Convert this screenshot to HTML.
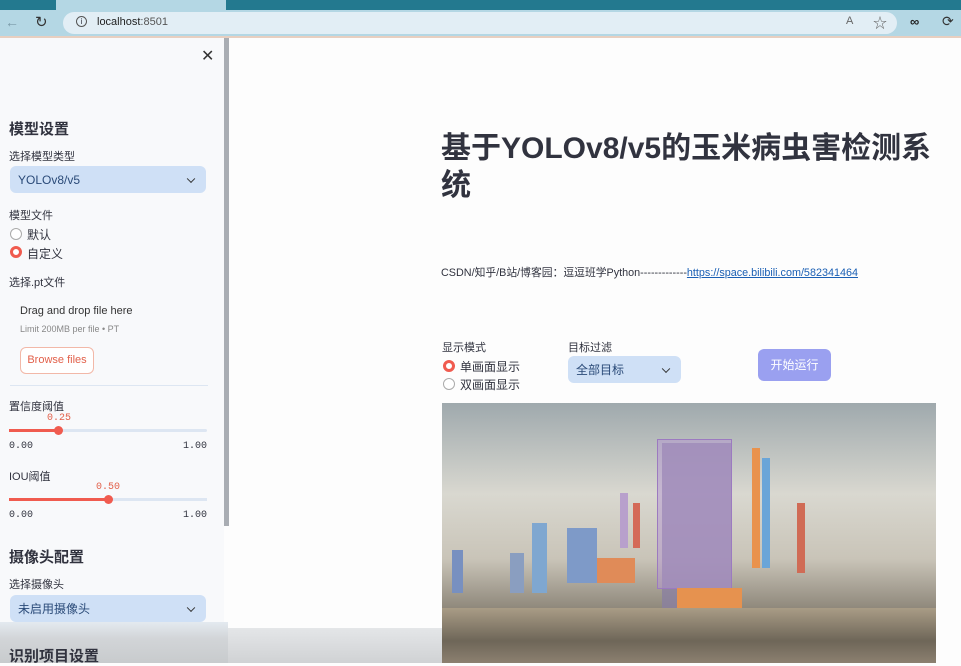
<!DOCTYPE html>
<html><head><meta charset="utf-8"><style>
*{margin:0;padding:0;box-sizing:border-box}
body{width:961px;height:663px;overflow:hidden;position:relative;background:#fdfdfd;font-family:"Liberation Sans","Noto Sans CJK SC",sans-serif;color:#31333f}
.a{position:absolute}
.lbl{font-size:11px;color:#31333f}
.h{font-size:15px;font-weight:bold}
.sel{background:#cfe0f6;border-radius:6px;color:#2a4a78;font-size:12px;padding-left:8px;display:flex;align-items:center}
.chev{position:absolute;right:12px;top:50%;width:6px;height:6px;border-right:1.6px solid #333;border-bottom:1.6px solid #333;transform:translateY(-70%) rotate(45deg)}
.mono{font-family:"Liberation Mono",monospace;font-size:10px}
</style></head><body>
<div class="a" style="left:0;top:0;width:961px;height:10px;background:#23798f"></div>
<div class="a" style="left:56px;top:0;width:170px;height:10px;background:#b4d7e4"></div>
<div class="a" style="left:0;top:10px;width:961px;height:27px;background:#b4d7e4"></div>
<div class="a" style="left:63px;top:12px;width:834px;height:22px;background:#e2eef5;border-radius:11px"></div>
<div class="a" style="left:5px;top:14px;font-size:14px;color:#7a9aa8">←</div>
<div class="a" style="left:35px;top:13px;font-size:15px;color:#333">↻</div>
<div class="a" style="left:76px;top:16px;width:11px;height:11px;border:1px solid #555;border-radius:50%;font-size:8px;text-align:center;line-height:9px">i</div>
<div class="a" style="left:97px;top:16px;font-size:11px;color:#222">localhost<span style="color:#555">:8501</span></div>
<div class="a" style="left:846px;top:15px;font-size:11px;color:#666">A</div>
<div class="a" style="left:873px;top:13px;font-size:14px;color:#666">☆</div>
<div class="a" style="left:910px;top:14px;font-size:13px;color:#222;font-weight:bold">∞</div>
<div class="a" style="left:942px;top:13px;font-size:14px;color:#333">⟳</div>
<div class="a" style="left:0;top:36px;width:961px;height:2px;background:#e8cfc0"></div>
<div class="a" style="left:0;top:38px;width:224px;height:625px;background:#f8f9fb"></div>
<div class="a" style="left:224px;top:38px;width:5px;height:488px;background:#a9adb3"></div>
<div class="a" style="left:201px;top:46px;font-size:16px;color:#333">✕</div>
<div class="a h" style="left:9px;top:118px">模型设置</div>
<div class="a lbl" style="left:9px;top:148px">选择模型类型</div>
<div class="a sel" style="left:10px;top:166px;width:196px;height:27px">YOLOv8/v5<span class="chev"></span></div>
<div class="a lbl" style="left:9px;top:207px">模型文件</div>
<div class="a" style="left:10px;top:228px;width:12px;height:12px;border:1px solid #aaa;border-radius:50%;background:#fff"></div>
<div class="a" style="left:27px;top:226px;font-size:12px">默认</div>
<div class="a" style="left:10px;top:246px;width:12px;height:12px;border:3.5px solid #f05b4f;border-radius:50%;background:#fff"></div>
<div class="a" style="left:27px;top:245px;font-size:12px">自定义</div>
<div class="a lbl" style="left:9px;top:274px">选择.pt文件</div>
<div class="a" style="left:10px;top:292px;width:198px;height:94px;border-bottom:1px solid #dde6f2;background:#f8f9fb"></div>
<div class="a" style="left:20px;top:305px;font-size:11px;color:#333">Drag and drop file here</div>
<div class="a" style="left:20px;top:324px;font-size:9px;color:#888">Limit 200MB per file • PT</div>
<div class="a" style="left:20px;top:347px;width:74px;height:27px;border:1px solid #f2b8a8;border-radius:6px;background:#fff;color:#e2604a;font-size:11px;text-align:center;line-height:25px">Browse files</div>
<div class="a lbl" style="left:9px;top:398px">置信度阈值</div>
<div class="a mono" style="left:47px;top:413px;color:#e2604a">0.25</div>
<div class="a" style="left:9px;top:429px;width:198px;height:3px;background:#dde6f2;border-radius:2px"></div>
<div class="a" style="left:9px;top:429px;width:50px;height:3px;background:#f05b4f"></div>
<div class="a" style="left:54px;top:426px;width:9px;height:9px;background:#f05b4f;border-radius:50%"></div>
<div class="a mono" style="left:9px;top:441px">0.00</div>
<div class="a mono" style="left:183px;top:441px">1.00</div>
<div class="a lbl" style="left:9px;top:468px">IOU阈值</div>
<div class="a mono" style="left:96px;top:482px;color:#e2604a">0.50</div>
<div class="a" style="left:9px;top:498px;width:198px;height:3px;background:#dde6f2"></div>
<div class="a" style="left:9px;top:498px;width:99px;height:3px;background:#f05b4f"></div>
<div class="a" style="left:104px;top:495px;width:9px;height:9px;background:#f05b4f;border-radius:50%"></div>
<div class="a mono" style="left:9px;top:510px">0.00</div>
<div class="a mono" style="left:183px;top:510px">1.00</div>
<div class="a h" style="left:9px;top:546px">摄像头配置</div>
<div class="a lbl" style="left:9px;top:576px">选择摄像头</div>
<div class="a sel" style="left:10px;top:595px;width:196px;height:27px">未启用摄像头<span class="chev"></span></div>
<div class="a" style="left:0;top:622px;width:228px;height:41px;background:linear-gradient(#e4eaf0,#d2d5d8 40%,#c8cbcd)"></div>
<div class="a" style="left:228px;top:628px;width:214px;height:35px;background:linear-gradient(#e4e6e8,#d0d2d4)"></div>
<div class="a h" style="left:9px;top:645px">识别项目设置</div>
<div class="a" style="left:441px;top:130px;font-size:30px;font-weight:bold;line-height:37px;width:520px;color:#31333f;white-space:nowrap">基于YOLOv8/v5的玉米病虫害检测系<br>统</div>
<div class="a" style="left:441px;top:264px;font-size:10.8px">CSDN/知乎/B站/博客园：逗逗班学Python-------------<span style="color:#1a5fb4;text-decoration:underline">https://space.bilibili.com/582341464</span></div>
<div class="a lbl" style="left:442px;top:339px">显示模式</div>
<div class="a" style="left:443px;top:360px;width:12px;height:12px;border:3.5px solid #f05b4f;border-radius:50%;background:#fff"></div>
<div class="a" style="left:460px;top:358px;font-size:12px">单画面显示</div>
<div class="a" style="left:443px;top:378px;width:12px;height:12px;border:1px solid #aaa;border-radius:50%;background:#fff"></div>
<div class="a" style="left:460px;top:376px;font-size:12px">双画面显示</div>
<div class="a lbl" style="left:568px;top:339px">目标过滤</div>
<div class="a sel" style="left:568px;top:356px;width:113px;height:27px">全部目标<span class="chev"></span></div>
<div class="a" style="left:758px;top:349px;width:73px;height:32px;background:#9aa0f0;border-radius:6px;color:#fff;font-size:12px;text-align:center;line-height:32px">开始运行</div>
<div class="a" style="left:442px;top:403px;width:494px;height:260px;overflow:hidden;background:linear-gradient(#9fa9ad,#d9d8d0 35%,#c9c4b8 60%,#8c8578 80%,#b8ab98)">
<div class="a" style="left:220px;top:40px;width:70px;height:180px;background:#8a7fa0;opacity:.8"></div>
<div class="a" style="left:215px;top:36px;width:75px;height:150px;border:1px solid #9c7ac0;background:rgba(180,150,210,.5)"></div>
<div class="a" style="left:310px;top:45px;width:8px;height:120px;background:#e9924d"></div>
<div class="a" style="left:320px;top:55px;width:8px;height:110px;background:#6aa5d8"></div>
<div class="a" style="left:355px;top:100px;width:8px;height:70px;background:#d06b55"></div>
<div class="a" style="left:178px;top:90px;width:8px;height:55px;background:#b8a0cc"></div>
<div class="a" style="left:191px;top:100px;width:7px;height:45px;background:#d46a58"></div>
<div class="a" style="left:125px;top:125px;width:30px;height:55px;background:#7e9ac8"></div>
<div class="a" style="left:90px;top:120px;width:15px;height:70px;background:#7fa7d0"></div>
<div class="a" style="left:68px;top:150px;width:14px;height:40px;background:#8a9ec0"></div>
<div class="a" style="left:10px;top:147px;width:11px;height:43px;background:#7890c0"></div>
<div class="a" style="left:155px;top:155px;width:38px;height:25px;background:#e08b58"></div>
<div class="a" style="left:235px;top:185px;width:65px;height:30px;background:#e6924f"></div>
<div class="a" style="left:0;top:205px;width:494px;height:55px;background:linear-gradient(#a99c86,#6e6658 60%,#8c8070)"></div>
</div>
</body></html>
